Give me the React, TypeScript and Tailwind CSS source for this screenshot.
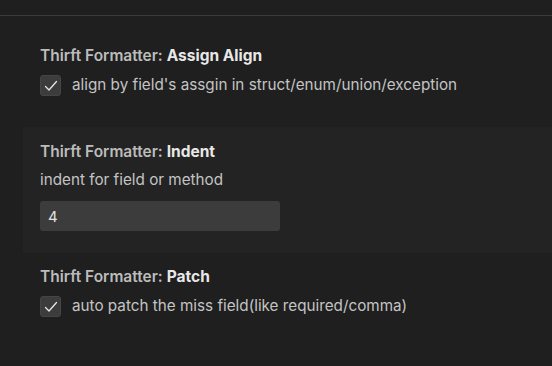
import { useState } from "react";

function Check({ on, onToggle }: { on: boolean; onToggle: () => void }) {
  return (
    <button
      onClick={onToggle}
      className="w-[21px] h-[21px] shrink-0 rounded-[3px] bg-[#3c3c3c] border border-[#454545] flex items-center justify-center"
    >
      {on && (
        <svg width="16" height="16" viewBox="0 0 16 16" fill="none">
          <path
            d="M2.5 8.5 L6 12 L13.5 3.5"
            stroke="#e6e6e6"
            strokeWidth="1.3"
            strokeLinecap="round"
            strokeLinejoin="round"
          />
        </svg>
      )}
    </button>
  );
}

function Title({ name }: { name: string }) {
  return (
    <div className="h-[18px] leading-[18px] text-[15.5px]">
      <span className="font-semibold text-[#bcbcbc]">Thirft Formatter: </span>
      <span className="font-bold text-[#e8e8e8]">{name}</span>
    </div>
  );
}

export default function App() {
  const [align, setAlign] = useState(true);
  const [patch, setPatch] = useState(true);
  const [indent, setIndent] = useState("4");

  return (
    <div
      className="w-[552px] h-[366px] bg-[#1f1f1f] overflow-hidden"
      style={{ fontFamily: "Inter, 'Noto Sans', sans-serif" }}
    >
      <div className="h-[15px]" />
      <div className="h-px bg-[#3b3b3b]" />

      <div className="ml-[23px] mt-[15px] pl-[17px] pt-4 pb-[31px]">
        <Title name="Assign Align" />
        <div className="mt-[10px] h-[21px] flex items-center gap-[11px]">
          <Check on={align} onToggle={() => setAlign(!align)} />
          <span className="text-[15.25px] text-[#c4c4c4]">
            align by field's assgin in struct/enum/union/exception
          </span>
        </div>
      </div>

      <div className="ml-[23px] bg-[#232323] pl-[17px] pt-4 pb-[22px]">
        <Title name="Indent" />
        <div className="mt-[10px] h-[18px] leading-[18px] text-[15.25px] text-[#c4c4c4]">
          indent for field or method
        </div>
        <input
          value={indent}
          onChange={(e) => setIndent(e.target.value)}
          className="mt-3 block w-[240px] h-[30px] rounded-[3px] bg-[#3c3c3c] px-2 text-[15px] text-[#e0e0e0] outline-none"
        />
      </div>

      <div className="ml-[23px] pl-[17px] pt-[15px]">
        <Title name="Patch" />
        <div className="mt-[10px] h-[21px] flex items-center gap-[11px]">
          <Check on={patch} onToggle={() => setPatch(!patch)} />
          <span className="text-[15.25px] text-[#c4c4c4]">
            auto patch the miss field(like required/comma)
          </span>
        </div>
      </div>
    </div>
  );
}
